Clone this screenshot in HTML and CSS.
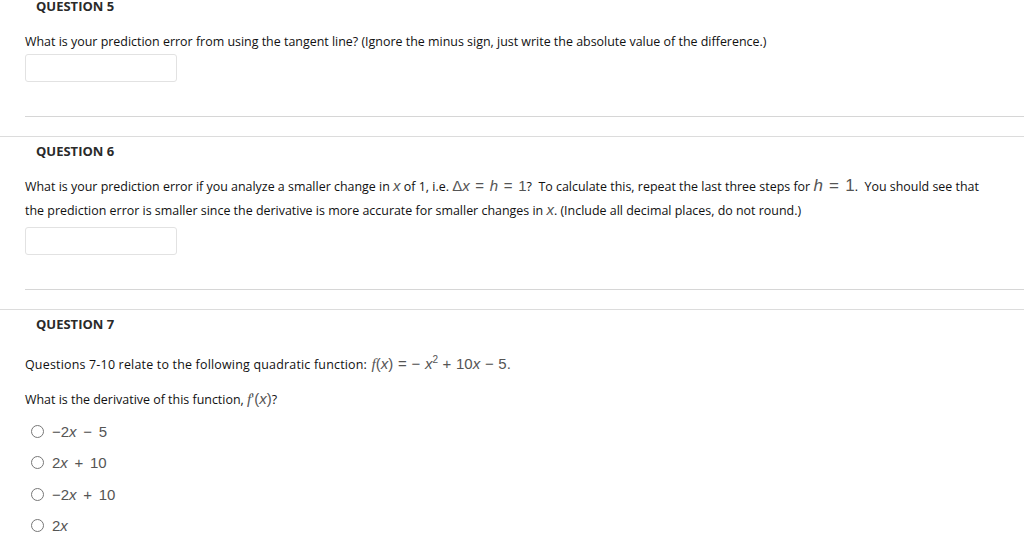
FILE: index.html
```html
<!DOCTYPE html>
<html>
<head>
<meta charset="utf-8">
<link rel="stylesheet" href="styles.css">
</head>
<body>
<div class="page">
  <section class="question first">
    <h2 class="qtitle">QUESTION 5</h2>
    <p class="text t5">What is your prediction error from using the tangent line? (Ignore the minus sign, just write the absolute value of the difference.)</p>
    <div class="answer"></div>
    <div class="divider"></div>
  </section>
  <section class="question">
    <h2 class="qtitle">QUESTION 6</h2>
    <p class="text t6">What is your prediction error if you analyze a smaller change in <span class="m"><i>x</i></span> of 1, i.e. <span class="m">Δ<i>x</i> = <i>h</i> = 1</span>? &nbsp;To calculate this, repeat the last three steps for <span class="m huge"><i>h</i> = 1</span>. &nbsp;You should see that the prediction error is smaller since the derivative is more accurate for smaller changes in <span class="m"><i>x</i></span>. (Include all decimal places, do not round.)</p>
    <div class="answer"></div>
    <div class="divider"></div>
  </section>
  <section class="question">
    <h2 class="qtitle">QUESTION 7</h2>
    <p class="text t7a">Questions 7-10 relate to the following quadratic function: <span class="m lead"><i class="fn">f</i>(<i>x</i>) = − <i>x</i><sup>2</sup> + 10<i>x</i> − 5.</span></p>
    <p class="text t7b">What is the derivative of this function, <span class="m"><i class="fn">f</i>'(<i>x</i>)</span>?</p>
    <ul class="options">
      <li class="opt"><span class="radio"></span><span class="m">−2<i>x</i> − 5</span></li>
      <li class="opt"><span class="radio"></span><span class="m">2<i>x</i> + 10</span></li>
      <li class="opt"><span class="radio"></span><span class="m">−2<i>x</i> + 10</span></li>
      <li class="opt"><span class="radio"></span><span class="m">2<i>x</i></span></li>
    </ul>
  </section>
</div>
</body>
</html>
```
FILE: styles.css
```css
html, body {
  margin: 0;
  padding: 0;
  background: #fff;
}
.page {
  font-family: "Open Sans", "Liberation Sans", sans-serif;
  color: #111;
  overflow: hidden;
  height: 556px;
}
.question {
  border-top: 1px solid #dcdcdc;
  padding-top: 6px;
}
.question.first {
  margin-top: -9px;
}
.qtitle {
  margin: 0 0 0 36px;
  font-size: 13px;
  font-weight: 700;
  line-height: 16px;
  color: #2a2a2a;
}
.text {
  margin: 16px 0 0 25px;
  font-size: 12.45px;
  line-height: 24px;
  padding-right: 45px;
}
.t6 {
  margin-bottom: 4px;
}
.t7a {
  margin-top: 21px;
  letter-spacing: 0.2px;
}
.t7b {
  margin-top: 11px;
}
.answer {
  margin-left: 25px;
  width: 150px;
  height: 26px;
  border: 1px solid #e2e2e2;
  border-radius: 3px;
}
.divider {
  margin: 34px 0 19px 25px;
  border-top: 1px solid #d6d6d6;
}
.m {
  font-family: "Liberation Sans", "DejaVu Sans", sans-serif;
  color: #555;
  font-size: 15px;
  line-height: 1;
  word-spacing: 1.5px;
  letter-spacing: 0;
}
.m.lead {
  margin-left: 1px;
  word-spacing: 0.5px;
}
.m.huge {
  font-size: 17px;
}
.m i {
  font-style: italic;
}
.m .fn {
  font-family: "Liberation Serif", serif;
  font-size: 15.5px;
}
.m sup {
  font-size: 10px;
  line-height: 0;
}
.options {
  list-style: none;
  margin: 4px 0 0 0;
  padding: 0;
}
.opt {
  display: flex;
  align-items: center;
  height: 31.3px;
  padding-left: 31px;
  gap: 8px;
}
.opt .m {
  word-spacing: 2.5px;
}
.radio {
  width: 11px;
  height: 11px;
  border: 1px solid #777;
  border-radius: 50%;
  flex: none;
}
```
